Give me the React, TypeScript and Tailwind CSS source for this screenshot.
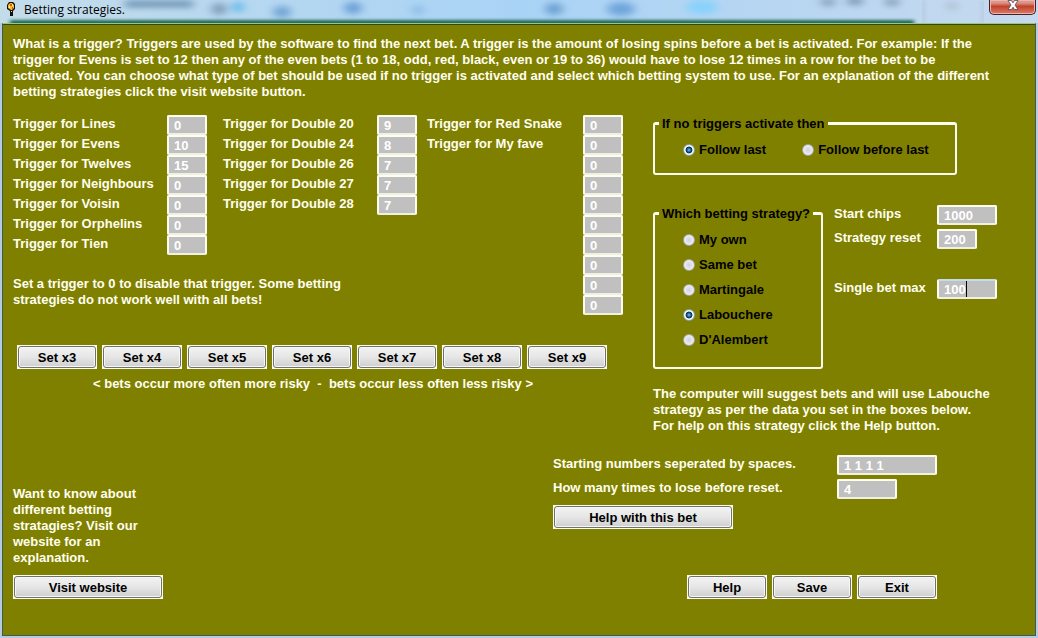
import React, { useState } from "react";

const evenTriggers = [
  { label: "Trigger for Lines", value: "0" },
  { label: "Trigger for Evens", value: "10" },
  { label: "Trigger for Twelves", value: "15" },
  { label: "Trigger for Neighbours", value: "0" },
  { label: "Trigger for Voisin", value: "0" },
  { label: "Trigger for Orphelins", value: "0" },
  { label: "Trigger for Tien", value: "0" },
];

const doubleTriggers = [
  { label: "Trigger for Double 20", value: "9" },
  { label: "Trigger for Double 24", value: "8" },
  { label: "Trigger for Double 26", value: "7" },
  { label: "Trigger for Double 27", value: "7" },
  { label: "Trigger for Double 28", value: "7" },
];

// the spare slots have no caption, only a box
const ownTriggers = [
  { label: "Trigger for Red Snake", value: "0" },
  { label: "Trigger for My fave", value: "0" },
  ...Array.from({ length: 8 }, () => ({ label: "", value: "0" })),
];

const strategies = ["My own", "Same bet", "Martingale", "Labouchere", "D'Alembert"];

const fieldClass =
  "block h-5 shrink-0 rounded-[2px] border-2 border-[#fdfdf0] border-b-[#f0f0e4] bg-[#c0c0c0] pl-[5px] pt-px text-[13px] font-bold text-white outline-none";

function TriggerList({ items, width }: { items: { label: string; value: string }[]; width: string }) {
  return (
    <div className={width}>
      {items.map((item, i) => (
        <label key={i} className="flex h-5 items-start justify-between">
          <span className="pt-px">{item.label}</span>
          <input type="text" defaultValue={item.value} aria-label={item.label || `Trigger ${i + 1}`} className={`${fieldClass} w-10`} />
        </label>
      ))}
    </div>
  );
}

function Button({ children, width = "w-20" }: { children: React.ReactNode; width?: string }) {
  return (
    <button type="button" className={`h-6 shrink-0 bg-[#fffff0] p-px text-black ${width}`}>
      <span className="flex h-full items-center justify-center rounded-[3px] border border-[#707070] bg-linear-to-b from-[#f3f3f3] via-[#e6e6e6] to-[#cfcfcf] pt-px shadow-[inset_0_0_0_1px_#f6f6f6]">
        {children}
      </span>
    </button>
  );
}

function Radio({ name, label, checked, onChange }: { name: string; label: string; checked: boolean; onChange: () => void }) {
  return (
    <label className="flex items-center gap-1 text-black">
      <input
        type="radio"
        name={name}
        checked={checked}
        onChange={onChange}
        className="size-3 appearance-none rounded-full border border-[#a3a4a2] bg-radial from-[#cfd0e2] to-[#fbfbfb] checked:border-[#8aa0a8] checked:bg-[radial-gradient(circle_at_50%_50%,#7cc8ee_0,#2a78b0_20%,#0b2c50_42%,#f4f8fa_54%)]"
      />
      <span className="pt-px">{label}</span>
    </label>
  );
}

function TitleBar() {
  return (
    <header className="relative flex h-[23px] items-start justify-between overflow-hidden bg-linear-to-r from-[#c3dcea] via-[#a9d3f6] to-[#c6d9ee]">
      <svg className="absolute inset-0 h-full w-full" viewBox="0 0 1038 23" preserveAspectRatio="none" aria-hidden="true">
        <defs>
          <filter id="glass" x="-10%" y="-50%" width="120%" height="200%">
            <feGaussianBlur stdDeviation="5 3" />
          </filter>
          <filter id="edge" x="-1%" y="-50%" width="102%" height="200%">
            <feGaussianBlur stdDeviation="2 1.5" />
          </filter>
        </defs>
        <g filter="url(#glass)">
          <rect x="125" y="1" width="68" height="6" fill="#668cae" />
          <ellipse cx="219" cy="9" rx="8" ry="6" fill="#829eb9" />
          <ellipse cx="238" cy="7" rx="6" ry="5" fill="#60b7e9" />
          <ellipse cx="282" cy="12" rx="9" ry="6" fill="#6fa3d4" />
          <ellipse cx="353" cy="8" rx="9" ry="6" fill="#6b9fd5" />
          <ellipse cx="418" cy="10" rx="7" ry="5" fill="#91bee7" />
          <ellipse cx="554" cy="9" rx="9" ry="6" fill="#6c9fd0" />
          <ellipse cx="621" cy="9" rx="14" ry="7" fill="#6ea5da" />
          <ellipse cx="702" cy="7" rx="16" ry="7" fill="#87d2fb" />
          <ellipse cx="828" cy="2" rx="8" ry="4" fill="#839fb9" />
          <ellipse cx="855" cy="1" rx="9" ry="4" fill="#7996b4" />
          <ellipse cx="892" cy="2" rx="8" ry="4" fill="#839fb9" />
          <ellipse cx="952" cy="6" rx="5" ry="4" fill="#aebccb" />
        </g>
        <rect x="10" y="20" width="904" height="8" fill="#216a55" filter="url(#edge)" />
        <path d="M923 0v23M983 0v23" stroke="#aebfd2" strokeWidth="2" filter="url(#edge)" />
      </svg>
      <div className="relative flex items-start gap-2 pl-[7px]">
        <svg width="9" height="17" viewBox="0 0 9 17" className="mt-px" aria-hidden="true">
          <path d="M2 1h4l2 2v5L6 10v5H3v-5L0 8V4z" fill="#15120a" />
          <path d="M3 2h2l2 2v3L5 9H4L1 7V4z" fill="#f2b92c" />
          <path d="M3 3h2v2H3zM5 6h1v2H5z" fill="#e8492a" />
          <path d="M5 3h1v2H5zM2 5h1v2H2z" fill="#fff4a8" />
          <path d="M4 10h1v1H4z" fill="#e9dfb0" />
        </svg>
        <h1 className="font-['Open_Sans','Noto_Sans',sans-serif] text-xs leading-5 font-normal text-black">Betting strategies.</h1>
      </div>
      <button
        type="button"
        aria-label="Close"
        className="relative mr-[2px] flex h-[15px] w-[47px] justify-center rounded-b-[5px] border border-t-0 border-[#43202a] bg-linear-to-b from-[#dd968c] from-20% via-[#c0412b] via-45% to-[#dc7a66] shadow-[inset_0_0_0_1px_#eeb5ab]"
      >
        <svg width="12" height="10" viewBox="0 0 12 10" aria-hidden="true">
          <path d="M1 .5h3.500L6 2.800 7.500 .5H11L8 5 11 9.500H7.500L6 7.200 4.500 9.500H1L4 5z" fill="#fff" stroke="#5a4450" strokeWidth=".8" />
        </svg>
      </button>
    </header>
  );
}

export default function App() {
  const [follow, setFollow] = useState("Follow last");
  const [strategy, setStrategy] = useState("Labouchere");

  return (
    <div className="flex min-h-screen flex-col bg-[#b4cbe2] font-['Liberation_Sans',Arial,sans-serif] text-[13px] leading-4 font-bold text-[#fffff0]">
      <TitleBar />
      <main className="mr-[2px] mb-[2px] ml-[2px] flex-1 border border-[#3d5c4a] border-t-[#9cc58e] bg-[#808000] px-[10px] pt-3 shadow-[inset_0_1px_0_0_#2f4a10]">
        <p>
          What is a trigger? Triggers are used by the software to find the next bet. A trigger is the amount of losing spins before a bet is activated. For example: If the
          <br />
          trigger for Evens is set to 12 then any of the even bets (1 to 18, odd, red, black, even or 19 to 36) would have to lose 12 times in a row for the bet to be
          <br />
          activated. You can choose what type of bet should be used if no trigger is activated and select which betting system to use. For an explanation of the different
          <br />
          betting strategies click the visit website button.
        </p>

        <div className="mt-[15px] flex gap-[30px]">
          <section className="w-[610px] shrink-0">
            <div className="flex justify-between">
              <div>
                <div className="flex gap-4">
                  <TriggerList items={evenTriggers} width="w-[194px]" />
                  <TriggerList items={doubleTriggers} width="w-[194px]" />
                </div>
                <p className="mt-[21px] w-[350px]">Set a trigger to 0 to disable that trigger. Some betting strategies do not work well with all bets!</p>
              </div>
              <TriggerList items={ownTriggers} width="w-[196px]" />
            </div>
            <div className="mt-[30px] ml-1 flex gap-[5px]">
              {[3, 4, 5, 6, 7, 8, 9].map((n) => (
                <Button key={n}>Set x{n}</Button>
              ))}
            </div>
            <p className="mt-[7px] pl-20 whitespace-pre">{"< bets occur more often more risky  -  bets occur less often less risky >"}</p>
          </section>

          <section className="flex-1">
            <fieldset className="h-[60px] w-[304px] rounded-[3px] border-2 border-t-[3px] border-[#fffff0] pl-7">
              <legend className="-ml-6 px-[3px] pt-px text-black">If no triggers activate then</legend>
              <div className="flex gap-9 pt-[9px]">
                {["Follow last", "Follow before last"].map((o) => (
                  <Radio key={o} name="follow" label={o} checked={follow === o} onChange={() => setFollow(o)} />
                ))}
              </div>
            </fieldset>

            <div className="mt-[30px] flex gap-[11px]">
              <fieldset className="h-[164px] w-[170px] shrink-0 rounded-[3px] border-2 border-t-[3px] border-[#fffff0] pl-7">
                <legend className="-ml-6 px-[3px] pt-px whitespace-nowrap text-black">Which betting strategy?</legend>
                <div className="flex flex-col gap-2 pt-[9px]">
                  {strategies.map((s) => (
                    <Radio key={s} name="strategy" label={s} checked={strategy === s} onChange={() => setStrategy(s)} />
                  ))}
                </div>
              </fieldset>
              <div className="flex flex-col gap-1">
                <label className="flex">
                  <span className="w-[103px] pt-px">Start chips</span>
                  <input type="text" defaultValue="1000" className={`${fieldClass} w-[60px]`} />
                </label>
                <label className="flex">
                  <span className="w-[103px] pt-px">Strategy reset</span>
                  <input type="text" defaultValue="200" className={`${fieldClass} w-10`} />
                </label>
                <label className="relative mt-[26px] flex">
                  <span className="w-[103px] pt-px">Single bet max</span>
                  <input type="text" defaultValue="100" className={`${fieldClass} w-[60px] border-t-[#c5dcea] caret-transparent`} />
                  <span className="absolute top-[2px] left-[132px] h-4 w-px bg-black" />
                </label>
              </div>
            </div>

            <p className="mt-[17px]">
              The computer will suggest bets and will use Labouche
              <br />
              strategy as per the data you set in the boxes below.
              <br />
              For help on this strategy click the Help button.
            </p>
          </section>
        </div>

        <div className="mt-[21px] flex gap-[390px]">
          <section className="flex w-[150px] shrink-0 flex-col justify-end">
            <p className="mb-[9px] w-[135px]">Want to know about different betting stratagies? Visit our website for an explanation.</p>
            <Button width="w-[150px]">Visit website</Button>
          </section>

          <section className="w-[384px]">
            <div className="flex flex-col gap-1">
              <label className="flex">
                <span className="w-[284px] pt-px">Starting numbers seperated by spaces.</span>
                <input type="text" defaultValue="1 1 1 1" className={`${fieldClass} w-[100px]`} />
              </label>
              <label className="flex">
                <span className="w-[284px] pt-px">How many times to lose before reset.</span>
                <input type="text" defaultValue="4" className={`${fieldClass} w-[60px]`} />
              </label>
            </div>
            <div className="mt-[6px]">
              <Button width="w-[180px]">Help with this bet</Button>
            </div>
            <div className="mt-[46px] flex justify-end gap-[5px]">
              <Button>Help</Button>
              <Button>Save</Button>
              <Button>Exit</Button>
            </div>
          </section>
        </div>
      </main>
    </div>
  );
}
